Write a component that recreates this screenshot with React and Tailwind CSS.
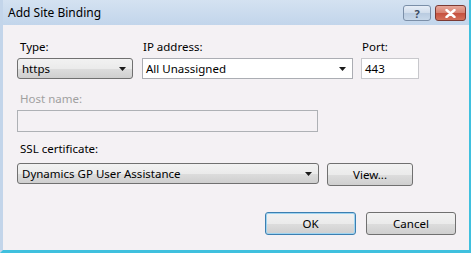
import React from 'react';

const font = { fontFamily: '"Segoe UI", "Noto Sans", "Liberation Sans", sans-serif' };

const Arrow = () => (
  <svg width="7" height="4" viewBox="0 0 7 4" className="shrink-0">
    <path d="M0 0 L7 0 L3.5 4 Z" fill="#1a1a1a" />
  </svg>
);

const ComboButton = ({ value, className = '' }) => (
  <div
    className={`flex items-center justify-between h-[21px] pl-[4px] pr-[6px] rounded-[3px] border border-[#707070] bg-[linear-gradient(#f2f2f2_0%,#ebebeb_50%,#dddddd_51%,#cfcfcf_100%)] text-[11.5px] text-black ${className}`}
  >
    <span className="leading-none">{value}</span>
    <Arrow />
  </div>
);

const PushButton = ({ label, isDefault = false, className = '' }) => (
  <div
    className={`flex items-center justify-center rounded-[3px] border text-[11.5px] text-black bg-[linear-gradient(#f2f2f2_0%,#ebebeb_50%,#dddddd_51%,#cfcfcf_100%)] ${
      isDefault ? 'border-[#3c7fb1] shadow-[inset_0_0_0_1px_#9fd4f0]' : 'border-[#707070]'
    } ${className}`}
  >
    {label}
  </div>
);

const Label = ({ children, muted = false }) => (
  <div className={`text-[11.5px] leading-[14px] ${muted ? 'text-[#a0a0a0]' : 'text-black'}`}>{children}</div>
);

export default function App() {
  return (
    <div className="w-[473px] h-[253px] bg-white overflow-hidden" style={font}>
      <div className="w-[471px] h-[253px] flex flex-col border-l-[3px] border-r-[2px] border-b-[3px] border-l-[#c3d5ea] border-r-[#3fc0de] border-b-[#3fc0de]">
        {/* Title bar */}
        <div className="h-[25px] shrink-0 flex items-center justify-between pl-[5px] pr-[3px] bg-[linear-gradient(#d4e2f1,#c2d5eb)]">
          <span className="text-[12px] text-black">Add Site Binding</span>
          <div className="flex items-start self-start pt-[5px] gap-[4px]">
            <div className="w-[28px] h-[16px] rounded-[3px] border border-[#7b8fa8] bg-[linear-gradient(#e7eef7_0%,#d0dceb_50%,#b9cbe0_51%,#c8d8ea_100%)] flex items-center justify-center text-[11px] font-bold text-[#3a4a60] leading-none">
              ?
            </div>
            <div className="w-[31px] h-[16px] rounded-[3px] border border-[#7b3a33] bg-[linear-gradient(#e8a79a_0%,#d6806f_50%,#c5503e_51%,#d4705a_100%)] flex items-center justify-center">
              <svg width="11" height="9" viewBox="0 0 11 9">
                <path d="M1.5 1 L9.5 8 M9.5 1 L1.5 8" stroke="#ffffff" strokeWidth="2.4" strokeLinecap="round" />
              </svg>
            </div>
          </div>
        </div>

        {/* Body */}
        <div className="flex-1 bg-[#f4f1f4] pl-[14px] pt-[15px]">
          <div className="flex">
            <div className="w-[116px] flex flex-col gap-[4px]">
              <div className="pl-[3px]"><Label>Type:</Label></div>
              <ComboButton value="https" />
            </div>
            <div className="w-[211px] ml-[9px] flex flex-col gap-[4px]">
              <div className="pl-[1px]"><Label>IP address:</Label></div>
              <div className="h-[21px] flex items-center justify-between pl-[3px] pr-[6px] border border-[#abadb3] bg-white text-[11.5px] text-black">
                <span className="leading-none">All Unassigned</span>
                <Arrow />
              </div>
            </div>
            <div className="w-[58px] ml-[8px] flex flex-col gap-[4px]">
              <div className="pl-[1px]"><Label>Port:</Label></div>
              <div className="h-[21px] flex items-center pl-[3px] border border-[#c8c8cc] bg-white text-[11.5px] text-black">
                <span className="leading-none">443</span>
              </div>
            </div>
          </div>

          <div className="mt-[13px] w-[301px] flex flex-col gap-[4px]">
            <div className="pl-[3px]"><Label muted>Host name:</Label></div>
            <div className="h-[22px] border border-[#aeb1b5] bg-[#f4f1f4]" />
          </div>

          <div className="mt-[10px] flex flex-col gap-[7px]">
            <div className="pl-[3px]"><Label>SSL certificate:</Label></div>
            <div className="flex items-start">
              <ComboButton value="Dynamics GP User Assistance" className="w-[302px]" />
              <PushButton label="View..." className="w-[86px] h-[23px] ml-[8px]" />
            </div>
          </div>

          <div className="mt-[26px] flex justify-end pr-[13px] gap-[10px]">
            <PushButton label="OK" isDefault className="w-[91px] h-[23px]" />
            <PushButton label="Cancel" className="w-[90px] h-[23px]" />
          </div>
        </div>
      </div>
    </div>
  );
}
